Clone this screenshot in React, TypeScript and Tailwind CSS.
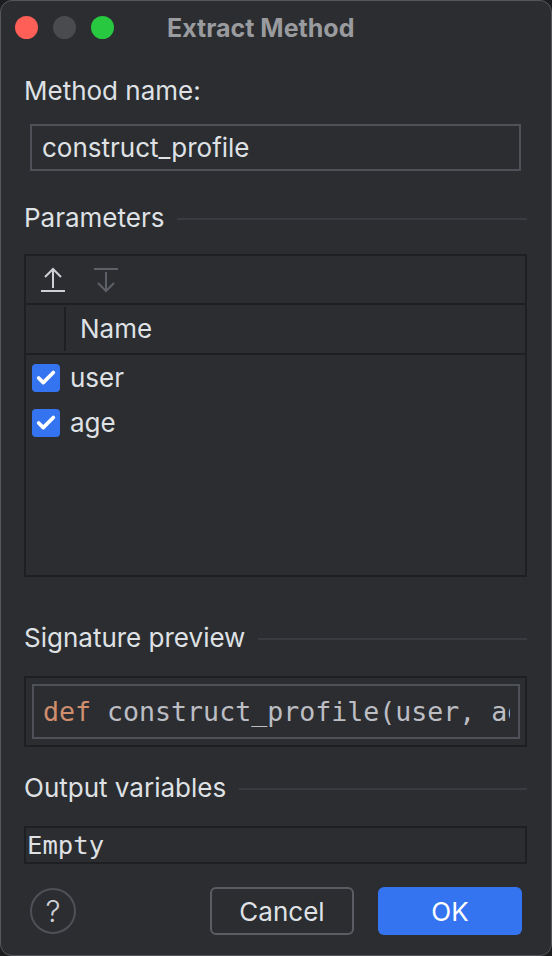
import { Check } from 'lucide-react'

const ui = { fontFamily: 'Inter, "Noto Sans", sans-serif' }
const mono = { fontFamily: '"DejaVu Sans Mono", "Liberation Mono", monospace' }

function SectionTitle({ title, className = '' }: { title: string; className?: string }) {
  return (
    <div className={`flex items-center gap-[13px] ${className}`}>
      <span className="text-[26px] leading-[32px] text-[#dfe1e5] whitespace-nowrap">{title}</span>
      <div className="mt-[2px] h-[2px] flex-1 bg-[#393b40]" />
    </div>
  )
}

function ParamRow({ name }: { name: string }) {
  return (
    <div className="flex h-[45px] items-center pl-[6px]">
      <span className="flex h-[28px] w-[28px] items-center justify-center rounded-[4px] bg-[#3574f0]">
        <Check size={22} strokeWidth={4} className="text-white" />
      </span>
      <span className="ml-[10px] text-[26px] leading-[32px] text-[#dfe1e5]">{name}</span>
    </div>
  )
}

export default function App() {
  return (
    <div className="h-[956px] w-[552px] bg-[#1c1d1f]" style={ui}>
      <div className="flex h-full flex-col rounded-[12px] border border-[#55575c] bg-[#2b2d30]">
        {/* title bar */}
        <div className="flex h-[53px] shrink-0 items-center pl-[14px]">
          <span className="h-[23px] w-[23px] rounded-full bg-[#ff5f57]" />
          <span className="ml-[15px] h-[23px] w-[23px] rounded-full bg-[#4a4b4e]" />
          <span className="ml-[15px] h-[23px] w-[23px] rounded-full bg-[#28c840]" />
          <span className="ml-[53px] text-[25px] font-bold leading-[32px] text-[#9a9b9e]">Extract Method</span>
        </div>

        <div className="flex flex-1 flex-col pl-[23px] pr-[24px]">
          <div className="mt-[21px] text-[26px] leading-[32px] text-[#dfe1e5]">Method name:</div>
          <div className="mx-[6px] mt-[17px] flex h-[47px] items-center border-2 border-[#4e5157] pl-[10px]">
            <span className="text-[26px] leading-[32px] text-[#dfe1e5]">construct_profile</span>
          </div>

          <SectionTitle title="Parameters" className="mt-[31px]" />

          <div className="mt-[20px] flex h-[323px] flex-col border-2 border-[#1e1f22]">
            <div className="flex h-[49px] items-center border-b-2 border-[#1e1f22] pl-[14px]">
              <svg width="26" height="26" viewBox="0 0 26 26" fill="none" stroke="#ced0d6" strokeWidth="2">
                <path d="M13 21V3M5 10l8-8 8 8M1 24h24" />
              </svg>
              <svg width="26" height="26" viewBox="0 0 26 26" fill="none" stroke="#5d6066" strokeWidth="2" className="ml-[27px]">
                <path d="M13 5v18M5 16l8 8 8-8M1 2h24" />
              </svg>
            </div>
            <div className="flex h-[50px] items-center border-b-2 border-[#1e1f22]">
              <div className="h-[44px] w-[40px] border-r-2 border-[#1e1f22]" />
              <span className="ml-[14px] text-[26px] leading-[32px] text-[#dfe1e5]">Name</span>
            </div>
            <ParamRow name="user" />
            <ParamRow name="age" />
          </div>

          <SectionTitle title="Signature preview" className="mt-[45px]" />

          <div className="mt-[22px] h-[71px] border-2 border-[#1e1f22] p-[6px] pr-[5px]">
            <div className="flex h-full items-center overflow-hidden border-2 border-[#4e5157] pl-[9px] pr-[8px]">
              <div className="overflow-hidden whitespace-nowrap text-[26.6px] leading-[32px] text-[#bcbec4]" style={mono}>
                <span className="text-[#cf8e6d]">def</span> construct_profile(user, age)
              </div>
            </div>
          </div>

          <SectionTitle title="Output variables" className="mt-[25px]" />

          <div className="mt-[22px] flex h-[38px] items-center border-2 border-[#1e1f22] pl-[1px]">
            <span className="text-[25.6px] leading-[32px] text-[#dfe1e5]" style={mono}>Empty</span>
          </div>

          <div className="mt-[23px] flex items-center">
            <div className="ml-[6px] flex h-[46px] w-[46px] items-center justify-center rounded-full border-2 border-[#4e5157]">
              <span className="text-[30px] font-light leading-none text-[#ced0d6]">?</span>
            </div>
            <button className="ml-auto h-[48px] w-[144px] rounded-[6px] border-2 border-[#5a5d63] text-[26px] text-[#dfe1e5]">
              Cancel
            </button>
            <button className="ml-[24px] mr-[5px] h-[48px] w-[144px] rounded-[6px] bg-[#3574f0] text-[26px] text-white">
              OK
            </button>
          </div>
        </div>
      </div>
    </div>
  )
}
